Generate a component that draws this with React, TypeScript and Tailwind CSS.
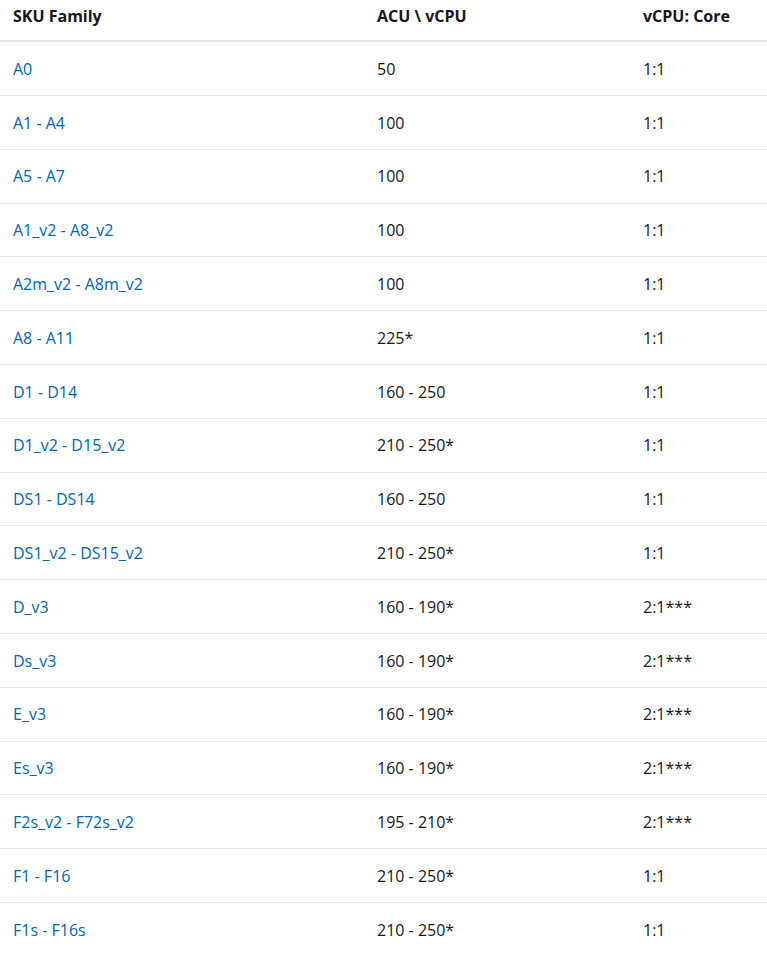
const rows: [string, string, string][] = [
  ["A0", "50", "1:1"],
  ["A1 - A4", "100", "1:1"],
  ["A5 - A7", "100", "1:1"],
  ["A1_v2 - A8_v2", "100", "1:1"],
  ["A2m_v2 - A8m_v2", "100", "1:1"],
  ["A8 - A11", "225*", "1:1"],
  ["D1 - D14", "160 - 250", "1:1"],
  ["D1_v2 - D15_v2", "210 - 250*", "1:1"],
  ["DS1 - DS14", "160 - 250", "1:1"],
  ["DS1_v2 - DS15_v2", "210 - 250*", "1:1"],
  ["D_v3", "160 - 190*", "2:1***"],
  ["Ds_v3", "160 - 190*", "2:1***"],
  ["E_v3", "160 - 190*", "2:1***"],
  ["Es_v3", "160 - 190*", "2:1***"],
  ["F2s_v2 - F72s_v2", "195 - 210*", "2:1***"],
  ["F1 - F16", "210 - 250*", "1:1"],
  ["F1s - F16s", "210 - 250*", "1:1"],
];

export default function App() {
  return (
    <div className="w-[767px] bg-white text-[#171717] text-[16px] leading-[20.8px] font-['Open_Sans',sans-serif]">
      <table className="w-full border-separate border-spacing-0">
        <thead>
          <tr>
            <th className="w-[365px] text-left align-top font-bold pl-[13px] pr-0 pt-[5.5px] pb-[14px] border-b-2 border-[#e6e6e6]">SKU Family</th>
            <th className="w-[266px] text-left align-top font-bold pl-[12px] pr-0 pt-[5.5px] pb-[14px] border-b-2 border-[#e6e6e6]">ACU \ vCPU</th>
            <th className="text-left align-top font-bold pl-[12px] pr-0 pt-[5.5px] pb-[14px] border-b-2 border-[#e6e6e6]">vCPU: Core</th>
          </tr>
        </thead>
        <tbody>
          {rows.map((r) => (
            <tr key={r[0]}>
              <td className="pl-[13px] pr-0 pt-[16.5px] pb-[15.5px] align-middle text-[#0065b3] border-b border-[#e6e6e6]">{r[0]}</td>
              <td className="pl-[12px] pr-0 pt-[16.5px] pb-[15.5px] align-middle border-b border-[#e6e6e6]">{r[1]}</td>
              <td className="pl-[12px] pr-0 pt-[16.5px] pb-[15.5px] align-middle border-b border-[#e6e6e6]">{r[2]}</td>
            </tr>
          ))}
        </tbody>
      </table>
    </div>
  );
}
